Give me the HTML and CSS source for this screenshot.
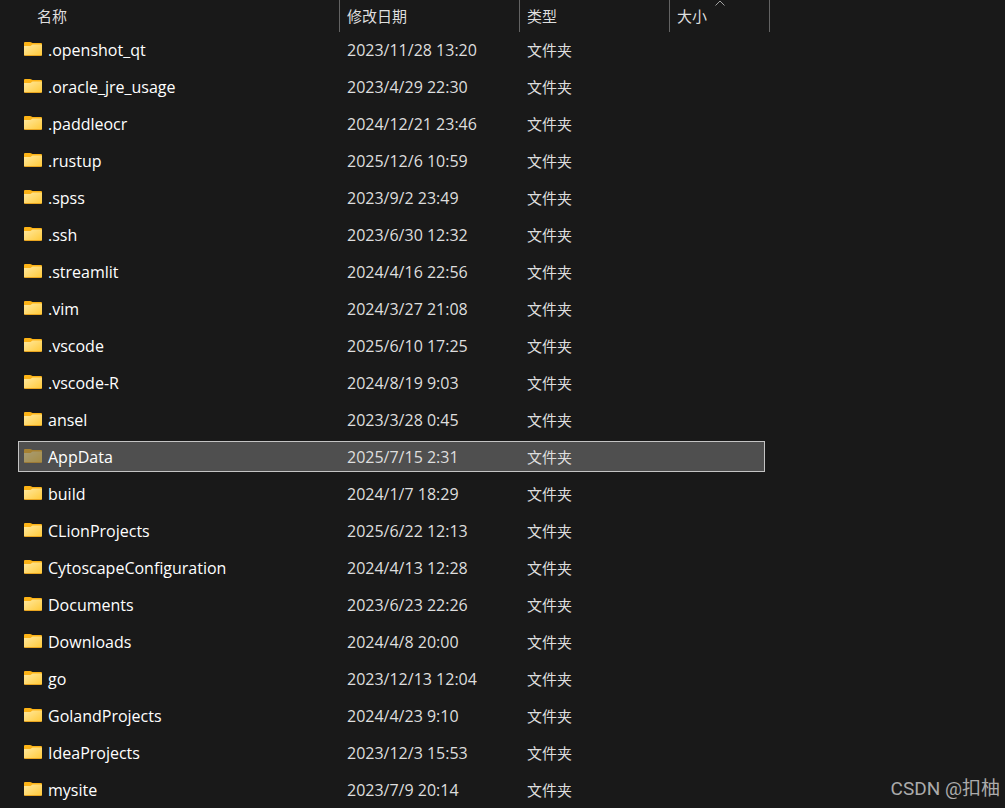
FILE: index.html
```
<!DOCTYPE html>
<html lang="zh-CN">

<head>
  <meta charset="UTF-8">
  <title>文件夹</title>
  <link rel="stylesheet" href="styles.css">
</head>
<body>
  <!-- 文件夹图标 -->
  <svg class="defs" width="0" height="0" aria-hidden="true">
    <defs>
      <linearGradient id="folderFront" x1="0" y1="0" x2="1" y2="1">
        <stop offset="0" stop-color="#ffe9a0" />
        <stop offset="1" stop-color="#ffc937" />
      </linearGradient>
      <symbol id="folder" viewBox="0 0 18 14">
        <path d="M0 1Q0 0 1 0H6Q7 0 7.5 .5L8.500 1H17Q18 1 18 2V8H0Z" fill="#fcb316" />
        <path d="M0 4H6.500L8.500 2.500H17.500L18 3V13L17 14H1L0 13Z" fill="url(#folderFront)" />
        <path d="M0 13H18L17 14H1Z" fill="#e9a520" />
      </symbol>
    </defs>
  </svg>

  <!-- 文件列表 -->
  <table class="files">
    <thead>
      <tr>
        <th class="name"><button type="button">名称</button></th>
        <th><button type="button">修改日期</button></th>
        <th><button type="button">类型</button></th>
        <th class="size"><button type="button">大小</button><svg class="sort" viewBox="0 0 10 6"><path d="M.5 5.500L5 1L9.500 5.500" /></svg></th>
      </tr>
    </thead>
    <tbody>
      <tr><td class="name"><svg class="icon"><use href="#folder" /></svg>.openshot_qt</td><td class="date">2023/11/28 13:20</td><td>文件夹</td><td></td></tr>
      <tr><td class="name"><svg class="icon"><use href="#folder" /></svg>.oracle_jre_usage</td><td class="date">2023/4/29 22:30</td><td>文件夹</td><td></td></tr>
      <tr><td class="name"><svg class="icon"><use href="#folder" /></svg>.paddleocr</td><td class="date">2024/12/21 23:46</td><td>文件夹</td><td></td></tr>
      <tr><td class="name"><svg class="icon"><use href="#folder" /></svg>.rustup</td><td class="date">2025/12/6 10:59</td><td>文件夹</td><td></td></tr>
      <tr><td class="name"><svg class="icon"><use href="#folder" /></svg>.spss</td><td class="date">2023/9/2 23:49</td><td>文件夹</td><td></td></tr>
      <tr><td class="name"><svg class="icon"><use href="#folder" /></svg>.ssh</td><td class="date">2023/6/30 12:32</td><td>文件夹</td><td></td></tr>
      <tr><td class="name"><svg class="icon"><use href="#folder" /></svg>.streamlit</td><td class="date">2024/4/16 22:56</td><td>文件夹</td><td></td></tr>
      <tr><td class="name"><svg class="icon"><use href="#folder" /></svg>.vim</td><td class="date">2024/3/27 21:08</td><td>文件夹</td><td></td></tr>
      <tr><td class="name"><svg class="icon"><use href="#folder" /></svg>.vscode</td><td class="date">2025/6/10 17:25</td><td>文件夹</td><td></td></tr>
      <tr><td class="name"><svg class="icon"><use href="#folder" /></svg>.vscode-R</td><td class="date">2024/8/19 9:03</td><td>文件夹</td><td></td></tr>
      <tr><td class="name"><svg class="icon"><use href="#folder" /></svg>ansel</td><td class="date">2023/3/28 0:45</td><td>文件夹</td><td></td></tr>
      <tr class="selected"><td class="name"><svg class="icon"><use href="#folder" /></svg>AppData</td><td class="date">2025/7/15 2:31</td><td>文件夹</td><td></td></tr>
      <tr><td class="name"><svg class="icon"><use href="#folder" /></svg>build</td><td class="date">2024/1/7 18:29</td><td>文件夹</td><td></td></tr>
      <tr><td class="name"><svg class="icon"><use href="#folder" /></svg>CLionProjects</td><td class="date">2025/6/22 12:13</td><td>文件夹</td><td></td></tr>
      <tr><td class="name"><svg class="icon"><use href="#folder" /></svg>CytoscapeConfiguration</td><td class="date">2024/4/13 12:28</td><td>文件夹</td><td></td></tr>
      <tr><td class="name"><svg class="icon"><use href="#folder" /></svg>Documents</td><td class="date">2023/6/23 22:26</td><td>文件夹</td><td></td></tr>
      <tr><td class="name"><svg class="icon"><use href="#folder" /></svg>Downloads</td><td class="date">2024/4/8 20:00</td><td>文件夹</td><td></td></tr>
      <tr><td class="name"><svg class="icon"><use href="#folder" /></svg>go</td><td class="date">2023/12/13 12:04</td><td>文件夹</td><td></td></tr>
      <tr><td class="name"><svg class="icon"><use href="#folder" /></svg>GolandProjects</td><td class="date">2024/4/23 9:10</td><td>文件夹</td><td></td></tr>
      <tr><td class="name"><svg class="icon"><use href="#folder" /></svg>IdeaProjects</td><td class="date">2023/12/3 15:53</td><td>文件夹</td><td></td></tr>
      <tr><td class="name"><svg class="icon"><use href="#folder" /></svg>mysite</td><td class="date">2023/7/9 20:14</td><td>文件夹</td><td></td></tr>
    </tbody>
  </table>

  <div class="watermark">CSDN @扣柚</div>
</body>
</html>
```
FILE: styles.css
```
body {
  margin: 0;
  background: #191919;
  color: #dedede;
  font-family: "Open Sans", "Noto Sans CJK SC", sans-serif;
  font-size: 15px;
}

.defs {
  position: absolute;
}

.files,
.files thead {
  display: block;
}

.files tbody {
  display: grid;
  gap: 6px;
  padding: 2px 0 0 18px;
}

.files tr {
  display: grid;
  grid-template-columns: 321px 180px 150px 95px;
}

.files thead tr {
  grid-template-columns: 340px 180px 150px 100px;
}

th {
  position: relative;
  height: 32px;
  box-sizing: border-box;
  padding: 0;
  border-right: 1px solid #636363;
}

th button {
  display: block;
  width: 100%;
  height: 32px;
  padding: 0 7px 2px;
  border: 0;
  background: none;
  color: #dedede;
  font: inherit;
  font-weight: normal;
  text-align: left;
}

th.name button {
  padding-left: 37px;
}

/* 排序箭头 */
.sort {
  position: absolute;
  top: 0;
  left: calc(50% - 5px);
  width: 10px;
  height: 6px;
  fill: none;
  stroke: #a0a0a0;
}

.files tbody tr {
  box-sizing: border-box;
  width: 747px;
  height: 31px;
  border: 1px solid transparent;
}

.files tbody tr.selected {
  background: #4f4f4f;
  border-color: #c4c4c4;
}

td {
  padding: 0 7px;
  line-height: 30px;
  white-space: nowrap;
}

td.name,
td.date {
  font-size: 16px;
}

td.name {
  display: flex;
  gap: 6px;
  padding: 0 5px;
  color: #fff;
}

.icon {
  width: 18px;
  height: 14px;
  margin-top: 7px;
}

.selected .icon {
  opacity: 0.5;
}

.watermark {
  position: absolute;
  right: 5px;
  bottom: 4px;
  color: #ababab;
  font-family: Roboto, "Noto Sans CJK SC", sans-serif;
  font-size: 19px;
  line-height: 30px;
}
```
